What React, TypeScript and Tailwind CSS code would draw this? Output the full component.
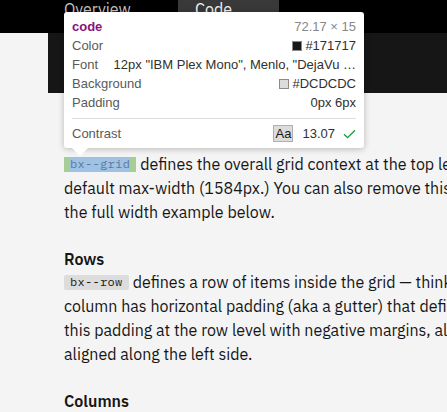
import React from 'react'

const sans = { fontFamily: '"IBM Plex Sans", Roboto, "Liberation Sans", sans-serif' }
const mono = { fontFamily: '"IBM Plex Mono", "Liberation Mono", monospace' }

const Swatch = ({ color }: { color: string }) => (
  <span className="inline-block w-[10px] h-[10px] border border-[#8a8a8a] mr-[3px]" style={{ backgroundColor: color }} />
)

const Row = ({ label, children }: { label: string; children: React.ReactNode }) => (
  <div className="flex items-center justify-between h-[19px] whitespace-nowrap">
    <span className="text-[#5a5a5a]">{label}</span>
    <span className="flex items-center text-[#303030]">{children}</span>
  </div>
)

const InspectTooltip = () => (
  <div
    className="absolute left-[64px] top-[12px] w-[300px] h-[136px] bg-white rounded-[3px] shadow-[0_1px_6px_rgba(0,0,0,0.25)] px-[8px] pt-[5px] text-[13px] leading-[19px]"
    style={{ fontFamily: '"Liberation Sans", Arial, sans-serif' }}
  >
    <div className="flex items-center justify-between h-[19px]">
      <span className="font-bold text-[#881280]">code</span>
      <span className="text-[#888]">72.17 × 15</span>
    </div>
    <Row label="Color">
      <Swatch color="#171717" />
      #171717
    </Row>
    <div className="flex items-center h-[19px] whitespace-nowrap">
      <span className="text-[#5a5a5a]">Font</span>
      <span className="ml-auto text-[#303030]">12px "IBM Plex Mono", Menlo, "DejaVu …</span>
    </div>
    <Row label="Background">
      <Swatch color="#dcdcdc" />
      #DCDCDC
    </Row>
    <Row label="Padding">0px 6px</Row>
    <div className="mt-[6px] border-t border-[#dedede]" />
    <div className="flex items-center justify-between h-[19px] mt-[5px]">
      <span className="text-[#5a5a5a]">Contrast</span>
      <span className="flex items-center text-[#303030]">
        <span className="flex items-center justify-center w-[20px] h-[17px] bg-[#dcdcdc] border border-[#b0b0b0] text-[#171717] text-[13px]">
          Aa
        </span>
        <span className="ml-[9px]">13.07</span>
        <svg className="ml-[8px]" width="13" height="10" viewBox="0 0 13 10" fill="none">
          <path d="M1 5.2 L4.6 8.6 L12 1.2" stroke="#0f9d3a" strokeWidth="1.3" />
        </svg>
      </span>
    </div>
    <div className="absolute left-[8px] -bottom-[8px] w-0 h-0 border-l-[8px] border-r-[8px] border-t-[8px] border-l-transparent border-r-transparent border-t-white" />
  </div>
)

const Code = ({ children }: { children: string }) => (
  <span
    className="inline-flex items-center h-[15px] px-[6px] bg-[#dcdcdc] rounded-[2px] text-[12px] tracking-[0.32px] text-[#171717]"
    style={mono}
  >
    {children}
  </span>
)

const HighlightedCode = ({ children }: { children: string }) => (
  <span className="inline-flex h-[15px] px-[6px] bg-[#a8ce97]">
    <span
      className="flex items-center h-[15px] bg-[#9ec1e4] text-[12px] tracking-[0.32px] text-[#5b7b9e]"
      style={mono}
    >
      {children}
    </span>
  </span>
)

const Line = ({ children }: { children: React.ReactNode }) => (
  <div className="flex items-center h-[24px] whitespace-nowrap">{children}</div>
)

export default function App() {
  return (
    <div className="relative w-[447px] h-[412px] overflow-hidden bg-[#f4f4f4] text-[#161616]" style={sans}>
      <div className="flex h-[33px] bg-black pl-[48px] text-[16px] leading-[16px]">
        <div className="w-[130px] pl-[16px] pt-[1px] text-[#c6c6c6]">Overview</div>
        <div className="w-[101px] pl-[17px] pt-[1px] bg-[#393939] text-[#f4f4f4]">Code</div>
      </div>
      <div className="ml-[48px] h-[60px] bg-[#161616]" />

      <div className="pl-[64px] mt-[59px] text-[16px] leading-[24px]">
        <Line>
          <HighlightedCode>bx--grid</HighlightedCode>
          <span className="ml-[4px]">defines the overall grid context at the top level. It also sets the</span>
        </Line>
        <Line>default max-width (1584px.) You can also remove this max-width; see</Line>
        <Line>the full width example below.</Line>

        <h3 className="mt-[24px] h-[22px] leading-[22px] font-semibold">Rows</h3>
        <Line>
          <Code>bx--row</Code>
          <span className="ml-[4px]">defines a row of items inside the grid — think of it as a wrapper.</span>
        </Line>
        <Line>column has horizontal padding (aka a gutter) that defines the space between</Line>
        <Line>this padding at the row level with negative margins, allowing the content to be</Line>
        <Line>aligned along the left side.</Line>

        <h3 className="mt-[24px] h-[22px] leading-[22px] font-semibold">Columns</h3>
      </div>

      <InspectTooltip />
    </div>
  )
}
